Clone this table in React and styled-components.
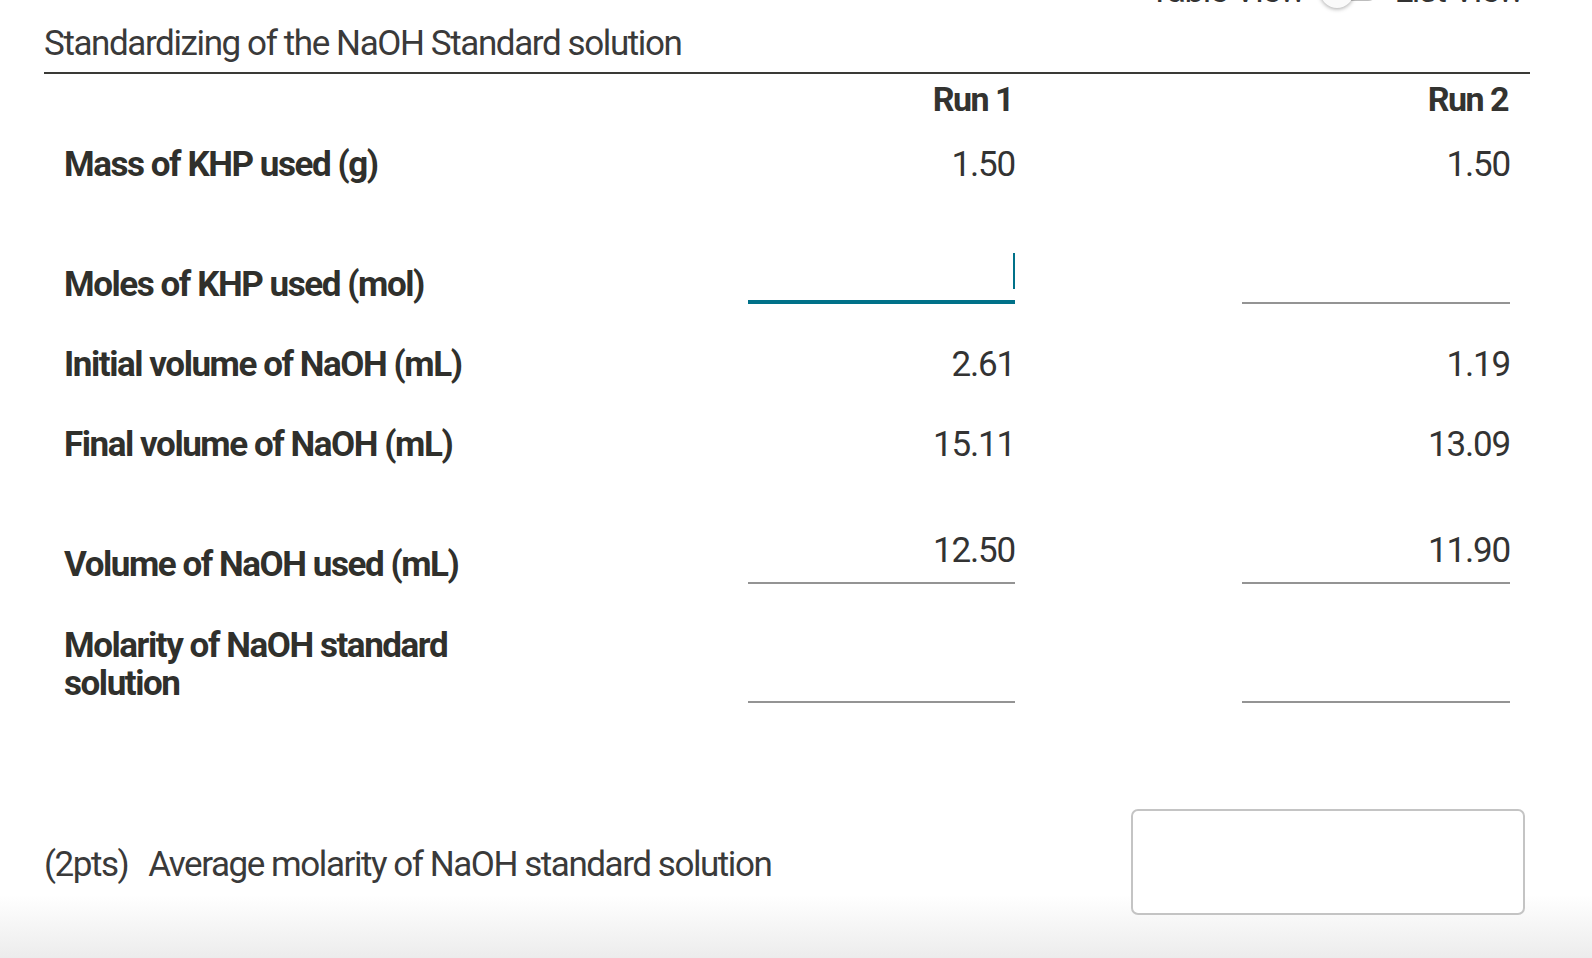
import styled, { createGlobalStyle } from 'styled-components';

const GlobalStyle = createGlobalStyle`
  html, body {
    margin: 0;
    padding: 0;
    height: 100%;
  }
  body {
    font-family: Roboto, "Liberation Sans", sans-serif;
    background: linear-gradient(180deg, #ffffff 0px, #ffffff 895px, #ececec 958px);
    overflow: hidden;
  }
`;

const rows = [
  { label: 'Mass of KHP used (g)', values: ['1.50', '1.50'], height: 82 },
  { label: 'Moles of KHP used (mol)', fields: [{ focused: true }, {}], height: 120 },
  { label: 'Initial volume of NaOH (mL)', values: ['2.61', '1.19'], height: 78 },
  { label: 'Final volume of NaOH (mL)', values: ['15.11', '13.09'], height: 82 },
  { label: 'Volume of NaOH used (mL)', fields: [{ value: '12.50' }, { value: '11.90' }], height: 120 },
  { label: 'Molarity of NaOH standard solution', fields: [{}, {}], height: 119 },
];

const App = () => {
  return (
    <>
      <GlobalStyle />
      <Page>
        <ViewToggle>
          <ToggleText>Table View</ToggleText>
          <Switch>
            <Knob />
          </Switch>
          <ToggleText>List View</ToggleText>
        </ViewToggle>

        <Title>Standardizing of the NaOH Standard solution</Title>

        <Table>
          <HeaderRow>
            <span />
            <RunHead>Run 1</RunHead>
            <span />
            <RunHead>Run 2</RunHead>
          </HeaderRow>

          {rows.map((row) => (
            <Row key={row.label} $height={row.height} $bottom={!!row.fields}>
              <Label>{row.label}</Label>
              {row.fields ? (
                <>
                  <Field $focused={row.fields[0].focused}>
                    {row.fields[0].value}
                    {row.fields[0].focused && <Caret />}
                  </Field>
                  <span />
                  <Field $focused={row.fields[1].focused}>{row.fields[1].value}</Field>
                </>
              ) : (
                <>
                  <Value>{row.values[0]}</Value>
                  <span />
                  <Value>{row.values[1]}</Value>
                </>
              )}
            </Row>
          ))}
        </Table>

        <AverageRow>
          <Question>
            <span>(2pts)</span>
            <span>Average molarity of NaOH standard solution</span>
          </Question>
          <AnswerBox />
        </AverageRow>
      </Page>
    </>
  );
};

const Page = styled.div`
  width: 1486px;
  margin-left: 44px;
  color: #333;
`;

const ViewToggle = styled.div`
  display: flex;
  justify-content: flex-end;
  align-items: center;
  gap: 16px;
  height: 40px;
  margin-top: -29px;
  padding-right: 7px;
`;

const ToggleText = styled.span`
  font-size: 35px;
  line-height: 40px;
  letter-spacing: -1.4px;
  color: #333;
`;

const Switch = styled.div`
  position: relative;
  width: 58px;
  height: 20px;
  border-radius: 10px;
  background: #bdbdbd;
`;

const Knob = styled.div`
  position: absolute;
  left: 0;
  top: -7px;
  width: 34px;
  height: 34px;
  border-radius: 50%;
  background: #fafafa;
  box-shadow: 0 1px 4px rgba(0, 0, 0, 0.35);
`;

const Title = styled.h2`
  margin: 13px 0 0;
  padding-bottom: 8px;
  font-size: 35px;
  line-height: 40px;
  font-weight: 400;
  letter-spacing: -1.4px;
  color: #3a3a3a;
  border-bottom: 2px solid #3a3a36;
`;

const Table = styled.div`
  display: flex;
  flex-direction: column;
  padding-left: 20px;
`;

const Grid = styled.div`
  display: grid;
  grid-template-columns: 684px 267px 227px 268px;
`;

const HeaderRow = styled(Grid)`
  height: 50px;
  align-items: center;
`;

const RunHead = styled.div`
  text-align: right;
  padding-right: 2px;
  font-size: 34px;
  font-weight: 700;
  letter-spacing: -1.5px;
  color: #333330;
`;

const Row = styled(Grid)`
  height: ${(p) => p.$height}px;
  box-sizing: border-box;
  align-items: ${(p) => (p.$bottom ? 'end' : 'center')};
  padding-bottom: ${(p) => (p.$bottom ? '22px' : '0')};
`;

const Label = styled.div`
  font-size: 35px;
  line-height: 38px;
  font-weight: 700;
  letter-spacing: -1.45px;
  color: #30302c;
  max-width: 420px;
`;

const Value = styled.div`
  text-align: right;
  font-size: 35px;
  line-height: 38px;
  letter-spacing: -1.2px;
  color: #333;
`;

const Field = styled.div`
  display: flex;
  justify-content: flex-end;
  align-items: flex-end;
  height: 52px;
  box-sizing: border-box;
  padding-bottom: ${(p) => (p.$focused ? '11px' : '12px')};
  border-bottom: ${(p) => (p.$focused ? '4px solid #007189' : '2px solid #949494')};
  font-size: 35px;
  line-height: 38px;
  letter-spacing: -1.2px;
  color: #333;
`;

const Caret = styled.span`
  display: block;
  width: 2px;
  height: 36px;
  margin-right: 0;
  background: #007189;
`;

const AverageRow = styled.div`
  display: flex;
  justify-content: space-between;
  align-items: center;
  margin-top: 84px;
`;

const Question = styled.div`
  display: flex;
  gap: 20px;
  padding-top: 6px;
  font-size: 35px;
  line-height: 40px;
  letter-spacing: -1.45px;
  color: #3a3a3a;
`;

const AnswerBox = styled.div`
  width: 394px;
  height: 106px;
  box-sizing: border-box;
  margin-right: 5px;
  border: 2px solid #c4c4c4;
  border-radius: 7px;
  background: #fff;
`;

export default App;
